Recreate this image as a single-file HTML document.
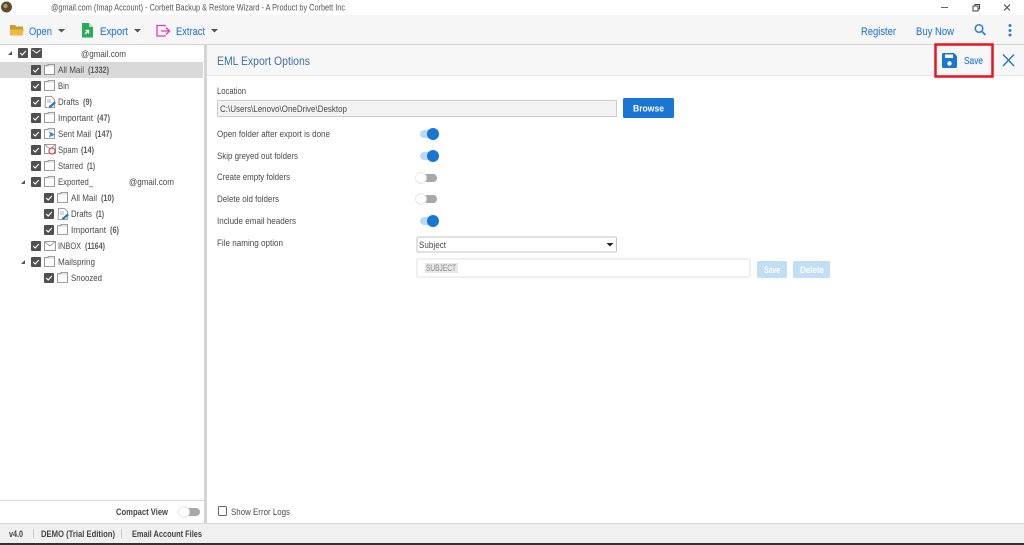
<!DOCTYPE html>
<html><head><meta charset="utf-8"><title>Corbett Backup &amp; Restore Wizard</title>
<style>
html,body{margin:0;padding:0;background:#fff;width:1024px;height:545px;overflow:hidden}
svg{display:block;filter:blur(.35px)}
text{font-family:"Liberation Sans",sans-serif;font-size:9.6px;fill:#4a4a4a}
.b{fill:#3a80d2}
.n{font-weight:bold;fill:#5a5a5a}
</style></head><body>
<svg width="1024" height="545" viewBox="0 0 1024 545" xmlns="http://www.w3.org/2000/svg">
<defs>
<g id="c"><rect x="0" y="0" width="10" height="10" rx="1" fill="#505050"/><path d="M2.200 5l2 2 3.600-4" fill="none" stroke="#fff" stroke-width="1.200"/></g>
<g id="f"><path d="M.5 1.500h3.500v-1h6.500v10h-10z" fill="#fff" stroke="#808080" stroke-width=".8"/><path d="M.5 2h10" stroke="#aaa" stroke-width=".6"/></g>
<g id="d"><path d="M.5 .5h6l3 3v8h-9.500z" fill="#fff" stroke="#808080" stroke-width=".8"/><path d="M2 4h4M2 6h4" stroke="#999" stroke-width=".7"/><path d="M3.500 10.500l6-5 1.500 1.500-5.500 5z" fill="#2a78c8"/></g>
<g id="m"><rect x=".5" y=".5" width="11" height="9" fill="#fff" stroke="#808080" stroke-width=".8"/><path d="M1 1l5 4 5-4" fill="none" stroke="#808080" stroke-width=".8"/></g>
<g id="on"><rect x="0" y="3" width="18" height="8" rx="4" fill="#b9dbf6"/><circle cx="13" cy="7" r="6" fill="#1976d2"/></g>
<g id="off"><rect x="4" y="3" width="18" height="8" rx="4" fill="#a8a8a8"/><circle cx="6" cy="7" r="5.500" fill="#fff" stroke="#e2e2e2" stroke-width=".8"/></g>
<path id="tri" d="M0 4l4-4v4z" fill="#555"/>
</defs>

<!-- title bar -->
<rect width="1024" height="15" fill="#fff"/>
<circle cx="6.500" cy="7" r="5.500" fill="#5d4a2c"/><circle cx="5.500" cy="6" r="2.200" fill="#b09a60"/>
<text x="51" y="10.500" textLength="294" lengthAdjust="spacingAndGlyphs" style="fill:#555">@gmail.com (Imap Account) - Corbett Backup &amp; Restore Wizard - A Product by Corbett Inc</text>
<path d="M941 7.500h7" stroke="#666"/>
<rect x="973" y="6" width="5" height="5" fill="none" stroke="#444"/><path d="M975 6v-1.500h4.500v4.500h-1.500" fill="none" stroke="#444"/>
<path d="M1004 4.500l6 6m0-6l-6 6" stroke="#444"/>

<!-- toolbar -->
<rect y="15" width="1024" height="29" fill="#f6f6f6"/>
<rect y="44" width="1024" height="1" fill="#d2d2d2"/>
<path d="M10 25h5l1 1.500h7v3h-13z" fill="#c99a2e"/><path d="M10 29.500h14l-1.500 6h-12.500z" fill="#f0b840"/>
<text x="29" y="35" class="b" style="font-size:11px;stroke:#3a80d2;stroke-width:.15" textLength="23" lengthAdjust="spacingAndGlyphs">Open</text>
<path d="M58 29h7l-3.500 3.500z" fill="#555"/>
<path d="M82 23h7l4 4v10.500h-11z" fill="#2bab59"/><path d="M89 23v4h4z" fill="#a6e0bc"/><path d="M85 34l3-3m-2.500-.5h3v3" stroke="#fff" stroke-width="1.300" fill="none"/>
<text x="100" y="35" class="b" style="font-size:11px;stroke:#3a80d2;stroke-width:.15" textLength="28" lengthAdjust="spacingAndGlyphs">Export</text>
<path d="M134 29h7l-3.500 3.500z" fill="#555"/>
<path d="M165 26.500v-1h-8v10.500h8v-1" fill="none" stroke="#e23cba" stroke-width="1.300"/><path d="M161 31h8m-3-3.500l3.500 3.500-3.500 3.500" fill="none" stroke="#e23cba" stroke-width="1.300"/>
<text x="176" y="35" class="b" style="font-size:11px;stroke:#3a80d2;stroke-width:.15" textLength="29" lengthAdjust="spacingAndGlyphs">Extract</text>
<path d="M211 29h7l-3.500 3.500z" fill="#555"/>
<text x="861" y="35" class="b" style="font-size:11px;stroke:#3a80d2;stroke-width:.15" textLength="35" lengthAdjust="spacingAndGlyphs">Register</text>
<text x="916" y="35" class="b" style="font-size:11px;stroke:#3a80d2;stroke-width:.15" textLength="38" lengthAdjust="spacingAndGlyphs">Buy Now</text>
<circle cx="979" cy="28.500" r="3.800" fill="none" stroke="#2f7fd2" stroke-width="1.500"/><path d="M982 31.500l3.500 3.500" stroke="#2f7fd2" stroke-width="1.700"/>
<circle cx="1010" cy="25.500" r="1.500" fill="#2f7fd2"/><circle cx="1010" cy="30.500" r="1.500" fill="#2f7fd2"/><circle cx="1010" cy="35" r="1.500" fill="#2f7fd2"/>

<!-- sidebar -->
<rect x="0" y="62" width="203" height="16" fill="#d9d9d9"/>
<rect x="204" y="45" width="3" height="479" fill="#d4d4d4"/>
<use href="#tri" x="8" y="51"/>
<use href="#c" x="18" y="48"/>
<rect x="31" y="48" width="11" height="10" rx="1" fill="#505050"/><path d="M32.500 50l4 3 4-3" fill="none" stroke="#fff" stroke-width="1"/>
<text x="81" y="57" textLength="45" lengthAdjust="spacingAndGlyphs">@gmail.com</text>

<use href="#c" x="31" y="65"/><use href="#f" x="44" y="64"/>
<text x="58" y="73" textLength="26" lengthAdjust="spacingAndGlyphs">All Mail</text><text x="88" y="73" class="n" textLength="21" lengthAdjust="spacingAndGlyphs">(1332)</text>
<use href="#c" x="31" y="81"/><use href="#f" x="44" y="80"/>
<text x="58" y="89" textLength="11" lengthAdjust="spacingAndGlyphs">Bin</text>
<use href="#c" x="31" y="97"/><use href="#d" x="45" y="96"/>
<text x="58" y="105" textLength="21" lengthAdjust="spacingAndGlyphs">Drafts</text><text x="83" y="105" class="n" textLength="9" lengthAdjust="spacingAndGlyphs">(9)</text>
<use href="#c" x="31" y="113"/><use href="#f" x="44" y="112"/>
<text x="58" y="121" textLength="35" lengthAdjust="spacingAndGlyphs">Important</text><text x="97" y="121" class="n" textLength="13" lengthAdjust="spacingAndGlyphs">(47)</text>
<use href="#c" x="31" y="129"/><use href="#f" x="44" y="128"/><path d="M49 131.500l6 3-6 3 1-3z" fill="#2a8ad8"/>
<text x="58" y="137" textLength="33" lengthAdjust="spacingAndGlyphs">Sent Mail</text><text x="95" y="137" class="n" textLength="17" lengthAdjust="spacingAndGlyphs">(147)</text>
<use href="#c" x="31" y="145"/><use href="#m" x="44" y="144"/><circle cx="52" cy="151" r="3" fill="#fff" stroke="#e2404a" stroke-width="1.200"/>
<text x="58" y="153" textLength="20" lengthAdjust="spacingAndGlyphs">Spam</text><text x="81" y="153" class="n" textLength="13" lengthAdjust="spacingAndGlyphs">(14)</text>
<use href="#c" x="31" y="161"/><use href="#f" x="44" y="160"/>
<text x="58" y="169" textLength="25" lengthAdjust="spacingAndGlyphs">Starred</text><text x="87" y="169" class="n" textLength="8" lengthAdjust="spacingAndGlyphs">(1)</text>

<use href="#tri" x="21" y="180"/>
<use href="#c" x="31" y="177"/><use href="#f" x="44" y="176"/>
<text x="58" y="185" textLength="35" lengthAdjust="spacingAndGlyphs">Exported_</text><text x="129" y="185" textLength="45" lengthAdjust="spacingAndGlyphs">@gmail.com</text>
<use href="#c" x="44" y="193"/><use href="#f" x="57" y="192"/>
<text x="71" y="201" textLength="26" lengthAdjust="spacingAndGlyphs">All Mail</text><text x="101" y="201" class="n" textLength="13" lengthAdjust="spacingAndGlyphs">(10)</text>
<use href="#c" x="44" y="209"/><use href="#d" x="58" y="208"/>
<text x="71" y="217" textLength="21" lengthAdjust="spacingAndGlyphs">Drafts</text><text x="96" y="217" class="n" textLength="8" lengthAdjust="spacingAndGlyphs">(1)</text>
<use href="#c" x="44" y="225"/><use href="#f" x="57" y="224"/>
<text x="71" y="233" textLength="35" lengthAdjust="spacingAndGlyphs">Important</text><text x="110" y="233" class="n" textLength="9" lengthAdjust="spacingAndGlyphs">(6)</text>
<use href="#c" x="31" y="241"/><use href="#m" x="44" y="241"/>
<text x="58" y="249" textLength="23" lengthAdjust="spacingAndGlyphs">INBOX</text><text x="85" y="249" class="n" textLength="20" lengthAdjust="spacingAndGlyphs">(1164)</text>
<use href="#tri" x="21" y="260"/>
<use href="#c" x="31" y="257"/><use href="#f" x="44" y="256"/>
<text x="58" y="265" textLength="37" lengthAdjust="spacingAndGlyphs">Mailspring</text>
<use href="#c" x="44" y="273"/><use href="#f" x="57" y="272"/>
<text x="71" y="281" textLength="31" lengthAdjust="spacingAndGlyphs">Snoozed</text>

<rect x="0" y="500" width="204" height="1" fill="#d8d8d8"/>
<text x="116" y="515" class="n" textLength="52" lengthAdjust="spacingAndGlyphs" style="font-weight:bold;fill:#444">Compact View</text>
<use href="#off" x="178" y="505"/>

<!-- panel header -->
<rect x="207" y="45" width="817" height="30" fill="#f7f7f7"/>
<rect x="207" y="75" width="817" height="1" fill="#e6e6e6"/>
<text x="217" y="65" style="font-size:12px;fill:#3f6f9f" textLength="93" lengthAdjust="spacingAndGlyphs">EML Export Options</text>
<rect x="935.500" y="44.500" width="57" height="32" fill="none" stroke="#e8141e" stroke-width="2.500"/>
<path d="M943.500 53h10.500l3 3v10.500a1.500 1.500 0 0 1-1.500 1.500h-12a1.500 1.500 0 0 1-1.500-1.500v-12a1.500 1.500 0 0 1 1.500-1.500z" fill="#1976d2"/><rect x="945" y="54.500" width="8" height="3.500" fill="#fff"/><circle cx="949.500" cy="63.500" r="2.200" fill="#fff"/>
<text x="964" y="64" class="b" style="font-size:10px;stroke:#3a80d2;stroke-width:.2" textLength="19" lengthAdjust="spacingAndGlyphs">Save</text>
<path d="M1003 54.500l11 11.500m0-11.500l-11 11.500" stroke="#2a78c8" stroke-width="1.500"/>

<!-- form -->
<text x="217" y="94" textLength="29" lengthAdjust="spacingAndGlyphs">Location</text>
<rect x="217.500" y="100.500" width="399" height="16" fill="#f3f3f3" stroke="#cdcdcd"/>
<text x="220" y="112" textLength="127" lengthAdjust="spacingAndGlyphs">C:\Users\Lenovo\OneDrive\Desktop</text>
<rect x="623" y="98" width="51" height="20" rx="1.500" fill="#1976d2"/>
<text x="633" y="111.500" style="fill:#fff;font-weight:bold" textLength="31" lengthAdjust="spacingAndGlyphs">Browse</text>

<text x="217" y="137" textLength="113" lengthAdjust="spacingAndGlyphs">Open folder after export is done</text>
<use href="#on" x="420" y="127"/>
<text x="217" y="159" textLength="81" lengthAdjust="spacingAndGlyphs">Skip greyed out folders</text>
<use href="#on" x="420" y="149"/>
<text x="217" y="180" textLength="73" lengthAdjust="spacingAndGlyphs">Create empty folders</text>
<use href="#off" x="415" y="171"/>
<text x="217" y="202" textLength="62" lengthAdjust="spacingAndGlyphs">Delete old folders</text>
<use href="#off" x="415" y="192"/>
<text x="217" y="224" textLength="79" lengthAdjust="spacingAndGlyphs">Include email headers</text>
<use href="#on" x="420" y="214"/>
<text x="217" y="246" textLength="66" lengthAdjust="spacingAndGlyphs">File naming option</text>

<rect x="417" y="237" width="199.500" height="15" rx="1" fill="#fff" stroke="#c4c4c4"/>
<text x="419" y="248" textLength="27" lengthAdjust="spacingAndGlyphs">Subject</text>
<path d="M606.500 243h7l-3.500 3.500z" fill="#222"/>
<rect x="417" y="259" width="333" height="18" rx="1" fill="#fff" stroke="#e2e2e2"/>
<rect x="425" y="263" width="33" height="10" fill="#e8e8e8"/>
<text x="426" y="271" style="fill:#8a8a8a" textLength="30" lengthAdjust="spacingAndGlyphs">SUBJECT</text>
<rect x="757" y="261" width="30" height="17" rx="1.500" fill="#c2def5"/>
<text x="764" y="273" style="fill:#fff;font-weight:bold" textLength="16" lengthAdjust="spacingAndGlyphs">Save</text>
<rect x="793" y="261" width="37" height="17" rx="1.500" fill="#c2def5"/>
<text x="800" y="273" style="fill:#fff;font-weight:bold" textLength="24" lengthAdjust="spacingAndGlyphs">Delete</text>

<rect x="218.500" y="506.500" width="8" height="9" rx="1" fill="#fff" stroke="#666"/>
<text x="231" y="515" textLength="59" lengthAdjust="spacingAndGlyphs">Show Error Logs</text>

<!-- status bar -->
<rect y="524" width="1024" height="19" fill="#f0f0f0"/>
<rect y="523" width="1024" height="1" fill="#d8d8d8"/>
<rect y="543" width="1024" height="2" fill="#333"/>
<text x="9" y="537" class="n" style="fill:#444" textLength="14" lengthAdjust="spacingAndGlyphs">v4.0</text>
<rect x="33" y="529" width="1" height="9" fill="#ccc"/>
<text x="41" y="537" class="n" style="fill:#444" textLength="74" lengthAdjust="spacingAndGlyphs">DEMO (Trial Edition)</text>
<rect x="121" y="529" width="1" height="9" fill="#ccc"/>
<text x="132" y="537" class="n" style="fill:#444" textLength="70" lengthAdjust="spacingAndGlyphs">Email Account Files</text>
</svg>
</body></html>
